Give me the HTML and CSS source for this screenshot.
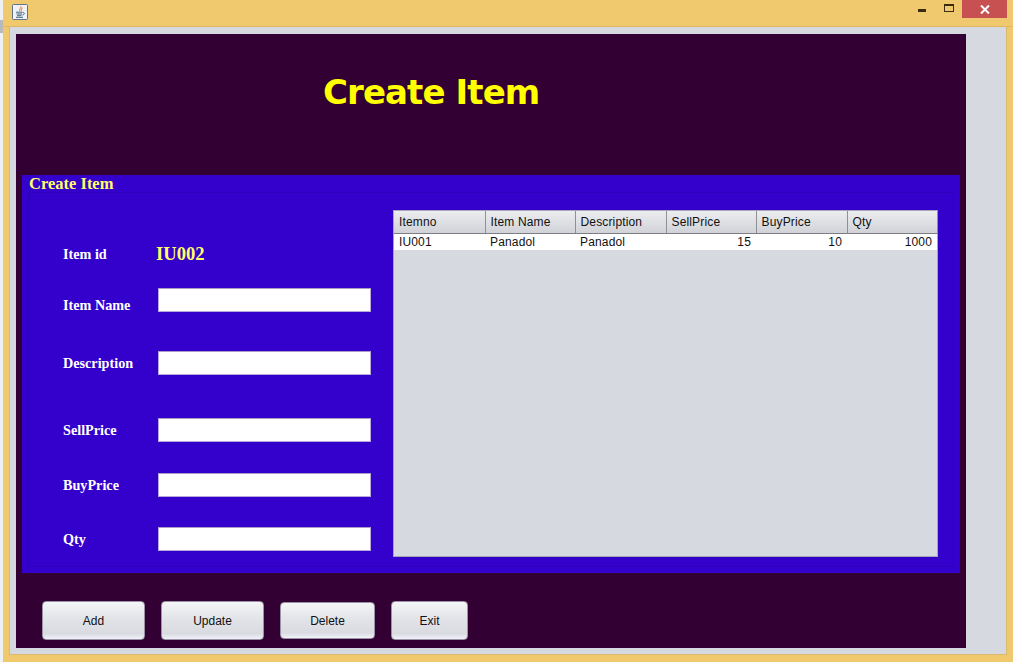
FILE: index.html
```html
<!DOCTYPE html>
<html lang="en">
<head>
<meta charset="utf-8">
<title>Create Item</title>
<link rel="stylesheet" href="styles.css">
</head>
<body>
<div class="desktop">
  <div class="edge"><div class="edge-mark"></div></div>
  <div class="window">
    <div class="titlebar">
      <svg class="app-icon" width="16" height="16" viewBox="0 0 16 16">
        <rect x="0.5" y="0.5" width="15" height="15" rx="1" fill="#eef2f6" stroke="#5f7488"/>
        <path d="M8.5 2.5c1.500 1.500-1.800 2.500-.6 4.500M10 3.500c.6 1-1.200 1.600-.5 3.200" fill="none" stroke="#e2762a" stroke-width="1"/>
        <path d="M4 8.200h6.500M4.500 10h5.500M5 11.700h4.500M4 13.300h7" stroke="#44627e" stroke-width="1" fill="none"/>
        <path d="M10.800 8.500c2 -.4 2.200 2 -.4 2.500" stroke="#44627e" stroke-width="1" fill="none"/>
      </svg>
      <div class="controls">
        <span class="min"></span>
        <span class="max"></span>
        <span class="close">
          <svg width="10" height="9" viewBox="0 0 10 9"><path d="M1 .5l8 8M9 .5l-8 8" stroke="#fff" stroke-width="2"/></svg>
        </span>
      </div>
    </div>
    <div class="client">
      <div class="frame">
        <header class="banner"><h1>Create Item</h1></header>
        <section class="panel">
          <h2>Create Item</h2>
          <div class="panel-body">
            <form class="form">
              <div class="row row-id"><label>Item id</label><span class="id-value">IU002</span></div>
              <div class="row row-name"><label>Item Name</label><input type="text"></div>
              <div class="row row-desc"><label>Description</label><input type="text"></div>
              <div class="row row-sell"><label>SellPrice</label><input type="text"></div>
              <div class="row row-buy"><label>BuyPrice</label><input type="text"></div>
              <div class="row row-qty"><label>Qty</label><input type="text"></div>
            </form>
            <div class="table-wrap">
              <table>
                <colgroup>
                  <col class="c1"><col class="c2"><col class="c3"><col class="c4"><col class="c5"><col class="c6">
                </colgroup>
                <thead>
                  <tr><th>Itemno</th><th>Item Name</th><th>Description</th><th>SellPrice</th><th>BuyPrice</th><th>Qty</th></tr>
                </thead>
                <tbody>
                  <tr><td>IU001</td><td>Panadol</td><td>Panadol</td><td class="num">15</td><td class="num">10</td><td class="num">1000</td></tr>
                </tbody>
              </table>
            </div>
          </div>
        </section>
        <footer class="actions">
          <button class="btn btn-add" type="button">Add</button>
          <button class="btn btn-update" type="button">Update</button>
          <button class="btn btn-delete" type="button">Delete</button>
          <button class="btn btn-exit" type="button">Exit</button>
        </footer>
      </div>
    </div>
  </div>
</div>
</body>
</html>
```
FILE: styles.css
```css
* { box-sizing: border-box; }
html, body { margin: 0; padding: 0; }
body { width: 1013px; height: 662px; overflow: hidden; font-family: "Liberation Sans", Arial, sans-serif; }

.desktop { display: flex; width: 1013px; height: 662px; }
.edge { width: 3px; background: #eef0f2; padding-top: 20px; }
.edge-mark { height: 13px; background: #b9b9b9; }

.window { flex: 1; display: flex; flex-direction: column; background: #f0c96e; }

.titlebar { height: 27px; flex: none; display: flex; align-items: flex-start; border-bottom: 1px solid #dfb760; }
.app-icon { margin: 4px 0 0 9px; }
.controls { margin-left: auto; display: flex; align-items: flex-start; padding-right: 6px; }
.min { width: 8px; height: 3px; background: #3a2a10; margin: 9px 18px 0 0; }
.max { width: 10px; height: 8px; margin: 4px 8px 0 0; border: 1px solid #3a2a10; border-top-width: 2px; }
.close { width: 45px; height: 18px; background: #c75050; display: flex; align-items: center; justify-content: center; }

.client { flex: 1; margin: 0 6px 7px 6px; padding: 7px 40px 6px 6px; background: #d7d9e0; border-left: 1px solid #d8b96e; border-right: 1px solid #d8b96e; border-bottom: 1px solid #d8b96e; }
.frame { height: 100%; background: #330033; display: flex; flex-direction: column; }

.banner { height: 141px; flex: none; padding: 39px 0 0 307px; }
.banner h1 { margin: 0; font: bold 34px/38px "DejaVu Sans", Verdana, sans-serif; letter-spacing: -0.9px; color: #ffff00; white-space: nowrap; }

.panel { height: 398px; flex: none; margin: 0 6px; background: #3300cc; display: flex; flex-direction: column; }
.panel h2 { margin: 0; height: 17px; padding-left: 7px; font: bold 16.5px/18px "Liberation Serif", "Times New Roman", serif; color: #ffff66; flex: none; }
.panel-body { flex: 1; display: flex; margin: 0 6px 6px; border: 1px solid #2f00ba; }

.form { width: 364px; flex: none; padding: 49px 0 0 34px; }
.row { display: flex; align-items: center; height: 24px; }
.row label { width: 95px; flex: none; font: bold 14.2px/16px "Liberation Serif", "Times New Roman", serif; color: #fff; }
.row input { width: 213px; height: 24px; margin: 0; padding: 0; background: #fff; border: 1px solid #b9a8dc; border-top-color: #a99bc4; outline: none; }
.row-name { margin-top: 22px; }
.row-name label { padding-top: 9px; height: 25px; }
.row-desc { margin-top: 39px; }
.row-sell { margin-top: 43px; }
.row-buy { margin-top: 31px; }
.row-qty { margin-top: 30px; }
.id-value { font: bold 18.6px/22px "Liberation Serif", "Times New Roman", serif; color: #ffff66; margin-left: -2px; }

.table-wrap { width: 545px; height: 347px; margin-top: 17px; background: #d6d9e0; border: 1px solid #a5a5b8; flex: none; align-self: flex-start; }
table { border-collapse: collapse; table-layout: fixed; width: 543px; font-size: 12px; color: #111; }
.c1 { width: 91px; } .c2 { width: 90px; } .c3 { width: 91px; } .c4 { width: 90px; } .c5 { width: 91px; } .c6 { width: 90px; }
th { height: 22px; padding: 0 0 0 5px; font-weight: normal; text-align: left; letter-spacing: 0.15px; background: linear-gradient(#ecedf0, #d0d2d7); border-right: 1px solid #8f8f96; border-bottom: 1px solid #7d7d84; }
td { height: 16px; padding: 1px 5px 0; line-height: 15px; background: #fff; white-space: nowrap; letter-spacing: 0.15px; }
.num { text-align: right; }

.actions { flex: 1; display: flex; align-items: flex-start; padding: 28px 0 0 26px; }
.btn { height: 39px; margin: 0 16px 0 0; padding: 0; font: 12px "Liberation Sans", Arial, sans-serif; color: #111; border: 1px solid #9a93a6; border-radius: 4px; background: linear-gradient(#f4f5f7 0%, #e2e4e8 45%, #d9dbe1 85%, #f2f2fa 100%); }
.btn-add, .btn-update { width: 103px; }
.btn-delete { width: 95px; height: 37px; margin-top: 1px; }
.btn-exit { width: 77px; }
```
